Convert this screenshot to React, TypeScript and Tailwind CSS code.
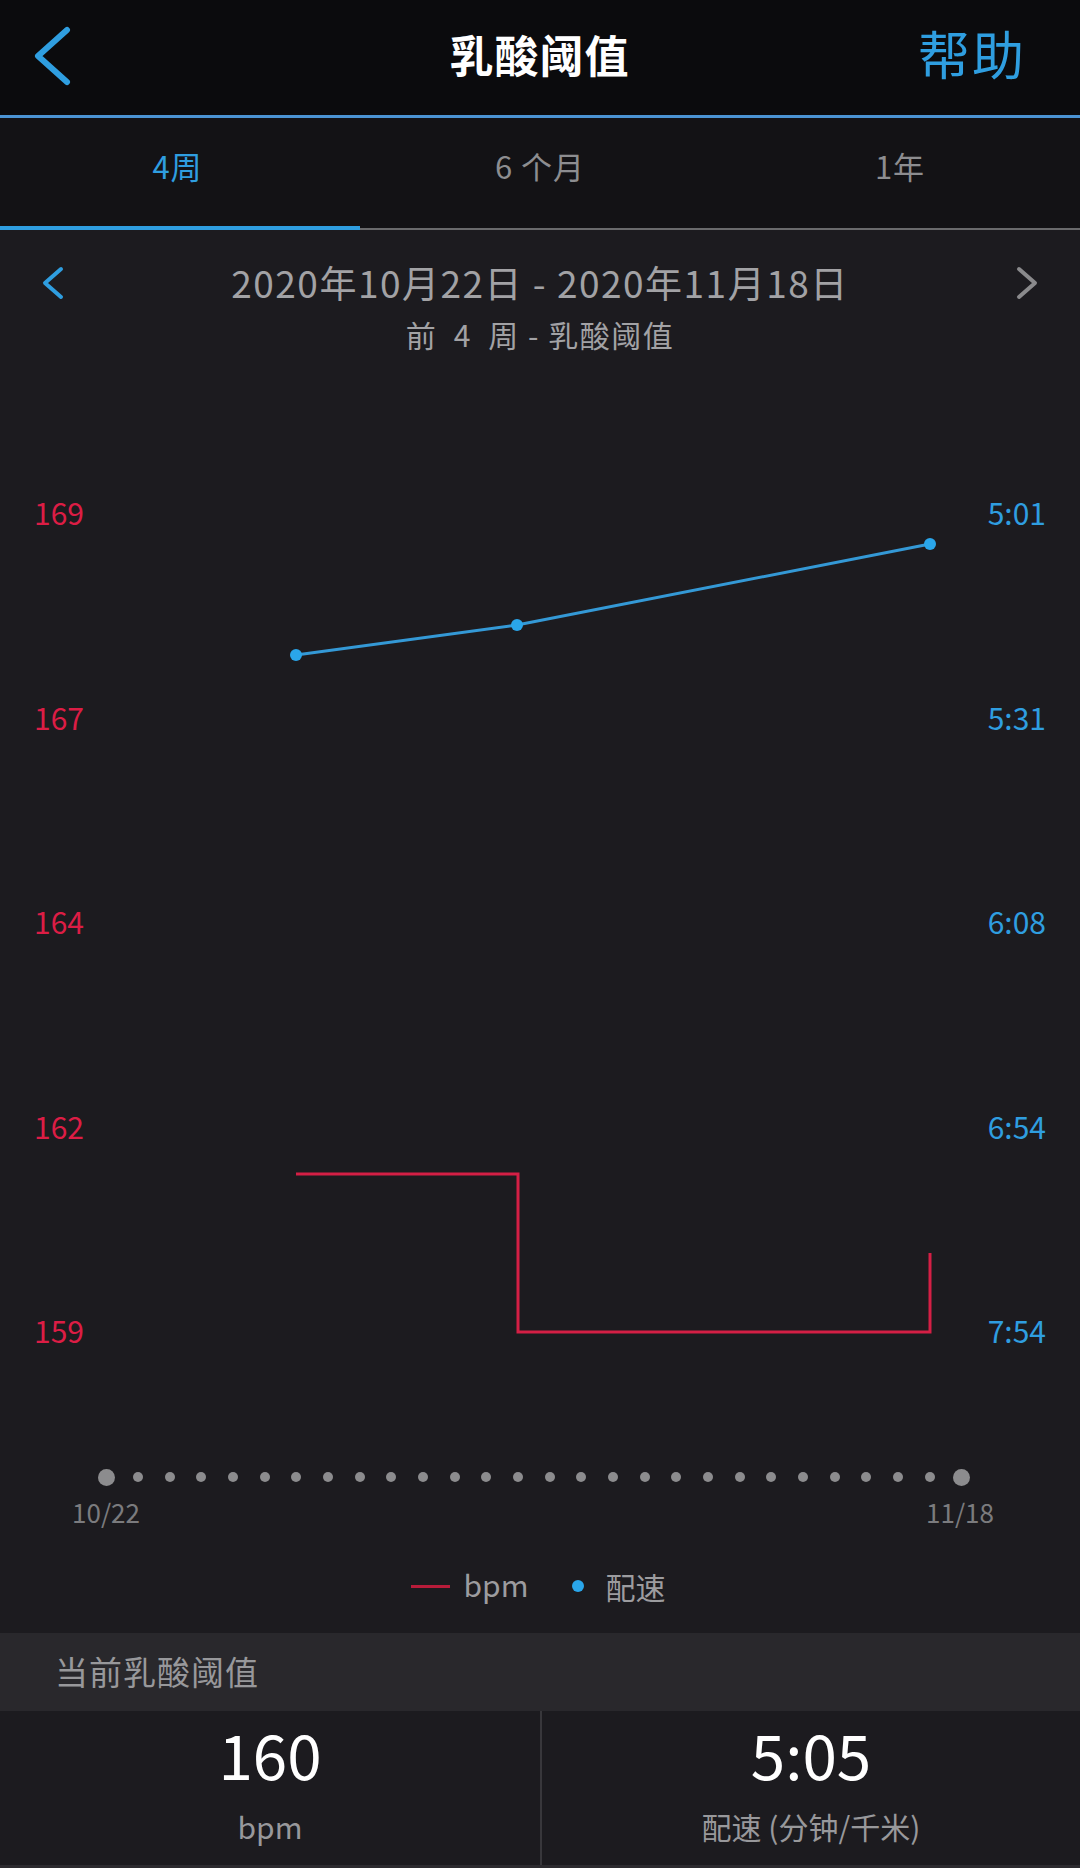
import React from 'react';

const CJK = "font-['Noto_Sans_CJK_SC','Noto_Sans',sans-serif]";

const Chevron: React.FC<{ dir: 'left' | 'right'; className?: string; w: number; h: number; stroke: number }> = ({
  dir,
  className,
  w,
  h,
  stroke,
}) => {
  const p = stroke / 2 + 1;
  const d =
    dir === 'left'
      ? `M${w - p} ${p} L${p} ${h / 2} L${w - p} ${h - p}`
      : `M${p} ${p} L${w - p} ${h / 2} L${p} ${h - p}`;
  return (
    <svg width={w} height={h} viewBox={`0 0 ${w} ${h}`} className={className} fill="none">
      <path d={d} stroke="currentColor" strokeWidth={stroke} strokeLinecap="round" strokeLinejoin="round" />
    </svg>
  );
};

const leftAxis = ['169', '167', '164', '162', '159'];
const rightAxis = ['5:01', '5:31', '6:08', '6:54', '7:54'];

// pace points (chart coords)
const pace = [
  [296, 175],
  [517, 145],
  [930, 64],
];

const days = Array.from({ length: 28 }, (_, i) => i);

const App: React.FC = () => {
  return (
    <div className={`w-[1080px] h-[1868px] bg-[#1c1b1f] flex flex-col overflow-hidden ${CJK}`}>
      {/* header */}
      <header className="h-[115px] bg-[#0b0b0d] flex items-center justify-between pl-[34px] pr-[54px]">
        <Chevron dir="left" w={37} h={60} stroke={6} className="text-[#2f9ee0] mt-[-4px]" />
        <h1 className="text-white text-[44px] font-semibold tracking-[1px] mt-[-8px] ml-[90px]">乳酸阈值</h1>
        <span className="text-[#2f9ee0] text-[52px] mt-[-10px] tracking-[2px]">帮助</span>
      </header>
      <div className="h-[3px] bg-[#4b93d3]" />

      {/* period tabs */}
      <nav className="bg-[#131215] flex flex-col">
        <div className="h-[108px] grid grid-cols-3 items-center text-[31px] pb-[12px]">
          <span className="text-center text-[#2f9ee0] tracking-[1px] ml-[-5px]">4周</span>
          <span className="text-center text-[#8d8d90] tracking-[1px]">6 个月</span>
          <span className="text-center text-[#8d8d90] tracking-[1px]">1年</span>
        </div>
        <div className="flex items-end h-[4px]">
          <div className="w-[360px] h-[4px] bg-[#2f9ee0]" />
          <div className="flex-1 h-[2px] bg-[#6a6a6c]" />
        </div>
      </nav>

      {/* date range */}
      <section className="h-[250px] flex flex-col pt-[33px]">
        <div className="h-[40px] flex items-center justify-between pl-[42px] pr-[42px]">
          <Chevron dir="left" w={22} h={34} stroke={4} className="text-[#2f9ee0]" />
          <span className="text-[37px] text-[#a2a2a5] tracking-[1.5px]">2020年10月22日 - 2020年11月18日</span>
          <Chevron dir="right" w={22} h={34} stroke={4} className="text-[#8a8a8c]" />
        </div>
        <div className="h-[34px] mt-[9px] text-center text-[30px] text-[#a2a2a5] tracking-[1.5px] whitespace-pre">
          {'前  4  周 - 乳酸阈值'}
        </div>
      </section>

      {/* chart */}
      <section className="relative h-[880px] flex justify-between px-[34px] pt-[12px] pb-[10px]">
        <div className="flex flex-col justify-between text-[30px] text-[#dc1d45]">
          {leftAxis.map((v) => (
            <span key={v} className="h-[40px] leading-[40px]">
              {v}
            </span>
          ))}
        </div>
        <div className="flex flex-col justify-between items-end text-[30px] text-[#2f9ee0]">
          {rightAxis.map((v) => (
            <span key={v} className="h-[40px] leading-[40px]">
              {v}
            </span>
          ))}
        </div>
        <svg className="absolute inset-0" width={1080} height={880} viewBox="0 0 1080 880">
          <path
            d="M296 694 H518 V852 H930 V773"
            fill="none"
            stroke="#d41f45"
            strokeWidth={3}
            strokeLinejoin="miter"
          />
          <polyline
            points={pace.map((p) => p.join(',')).join(' ')}
            fill="none"
            stroke="#3499d6"
            strokeWidth={3}
          />
          {pace.map(([x, y]) => (
            <circle key={x} cx={x} cy={y} r={6} fill="#2aa6ea" />
          ))}
        </svg>
      </section>

      {/* day ticks */}
      <div className="mt-[107px] ml-[98px] w-[872px] h-[20px] flex justify-between items-center">
        {days.map((d) => (
          <div key={d} className="w-[17px] flex justify-center">
            <div
              className={
                d === 0 || d === days.length - 1
                  ? 'w-[17px] h-[17px] rounded-full bg-[#8c8c8e]'
                  : 'w-[10px] h-[10px] rounded-full bg-[#8c8c8e]'
              }
            />
          </div>
        ))}
      </div>
      <div className="mt-[11px] ml-[66px] w-[934px] h-[28px] flex justify-between text-[26px] leading-[28px] text-[#7b7b7e]">
        <span className="w-[80px] text-center">10/22</span>
        <span className="w-[80px] text-center">11/18</span>
      </div>

      {/* legend */}
      <div className="mt-[43px] h-[34px] flex items-center justify-center text-[30px] text-[#9c9c9f] ml-[-4px]">
        <span className="w-[39px] h-[3px] bg-[#b81c3a]" />
        <span className="ml-[14px] leading-[34px] mt-[-4px]">bpm</span>
        <span className="ml-[44px] w-[12px] h-[12px] rounded-full bg-[#2aa6ea]" />
        <span className="ml-[21px] leading-[34px]">配速</span>
      </div>

      {/* current values */}
      <div className="mt-[30px] h-[78px] bg-[#29282c] flex items-center pl-[55px] text-[33px] text-[#98989b] tracking-[1px]">
        当前乳酸阈值
      </div>
      <div className="h-[154px] grid grid-cols-[540px_2px_1fr]">
        <div className="flex flex-col items-center pt-[9px]">
          <span className="text-[62px] leading-[66px] text-white">160</span>
          <span className="mt-[22px] text-[30px] leading-[36px] text-[#98989b]">bpm</span>
        </div>
        <div className="bg-[#38373b]" />
        <div className="flex flex-col items-center pt-[9px]">
          <span className="text-[62px] leading-[66px] text-white">5:05</span>
          <span className="mt-[22px] text-[30px] leading-[36px] text-[#98989b]">配速 (分钟/千米)</span>
        </div>
      </div>
      <div className="flex-1 bg-[#2c2b2f]" />
    </div>
  );
};

export default App;
